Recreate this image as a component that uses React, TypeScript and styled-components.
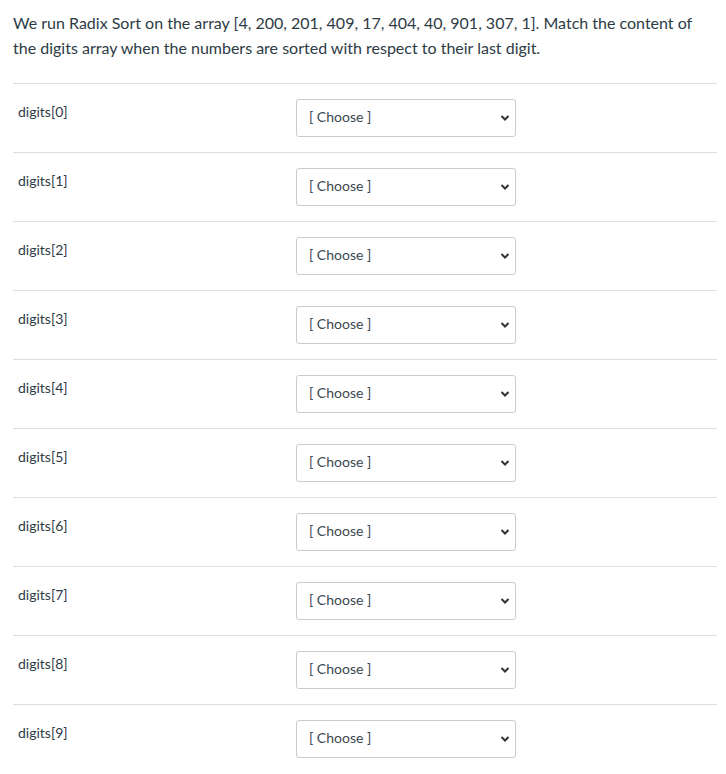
import React from "react";
import styled, { createGlobalStyle } from "styled-components";

const Global = createGlobalStyle`
  html, body { margin: 0; padding: 0; background: #ffffff; }
  body { font-family: Lato, "Noto Sans", "Liberation Sans", sans-serif; color: #2d3b45; }
`;

const Page = styled.div`
  padding: 10px 10px 0 13px;
  width: 704px;
`;

const Question = styled.p`
  margin: 0 0 23px 0;
  font-size: 16px;
  line-height: 25px;
  color: #2d3b45;
`;

const List = styled.div`
  display: flex;
  flex-direction: column;
`;

const Row = styled.div`
  display: grid;
  grid-template-columns: 283px 220px;
  align-items: start;
  height: 68px;
  border-top: 1px solid #dcdfe1;
`;

const Label = styled.div`
  padding: 19px 0 0 5px;
  font-size: 14px;
  line-height: 18px;
  color: #2d3b45;
`;

const SelectWrap = styled.div`
  position: relative;
  margin-top: 15px;
  width: 220px;
  height: 38px;
`;

const Select = styled.select`
  appearance: none;
  -webkit-appearance: none;
  box-sizing: border-box;
  width: 220px;
  height: 38px;
  padding: 0 30px 3px 12px;
  border: 1px solid #c7cdd1;
  border-radius: 3px;
  background: #ffffff;
  font-family: Lato, "Noto Sans", "Liberation Sans", sans-serif;
  font-size: 14px;
  color: #3b4751;
  outline: none;
`;

const Chevron = styled.svg`
  position: absolute;
  right: 6px;
  top: 15px;
  width: 10px;
  height: 8px;
  pointer-events: none;
`;

export default function App() {
  const rows = Array.from({ length: 10 }, (_, i) => i);
  return (
    <>
      <Global />
      <Page>
        <Question>
          We run Radix Sort on the array [4, 200, 201, 409, 17, 404, 40, 901, 307, 1]. Match the content of
          the digits array when the numbers are sorted with respect to their last digit.
        </Question>
        <List>
          {rows.map((i) => (
            <Row key={i}>
              <Label>digits[{i}]</Label>
              <SelectWrap>
                <Select defaultValue="">
                  <option value="">[ Choose ]</option>
                </Select>
                <Chevron viewBox="0 0 10 8">
                  <path d="M1.5 2 L5 5.5 L8.5 2" fill="none" stroke="#333" strokeWidth="2" />
                </Chevron>
              </SelectWrap>
            </Row>
          ))}
        </List>
      </Page>
    </>
  );
}
